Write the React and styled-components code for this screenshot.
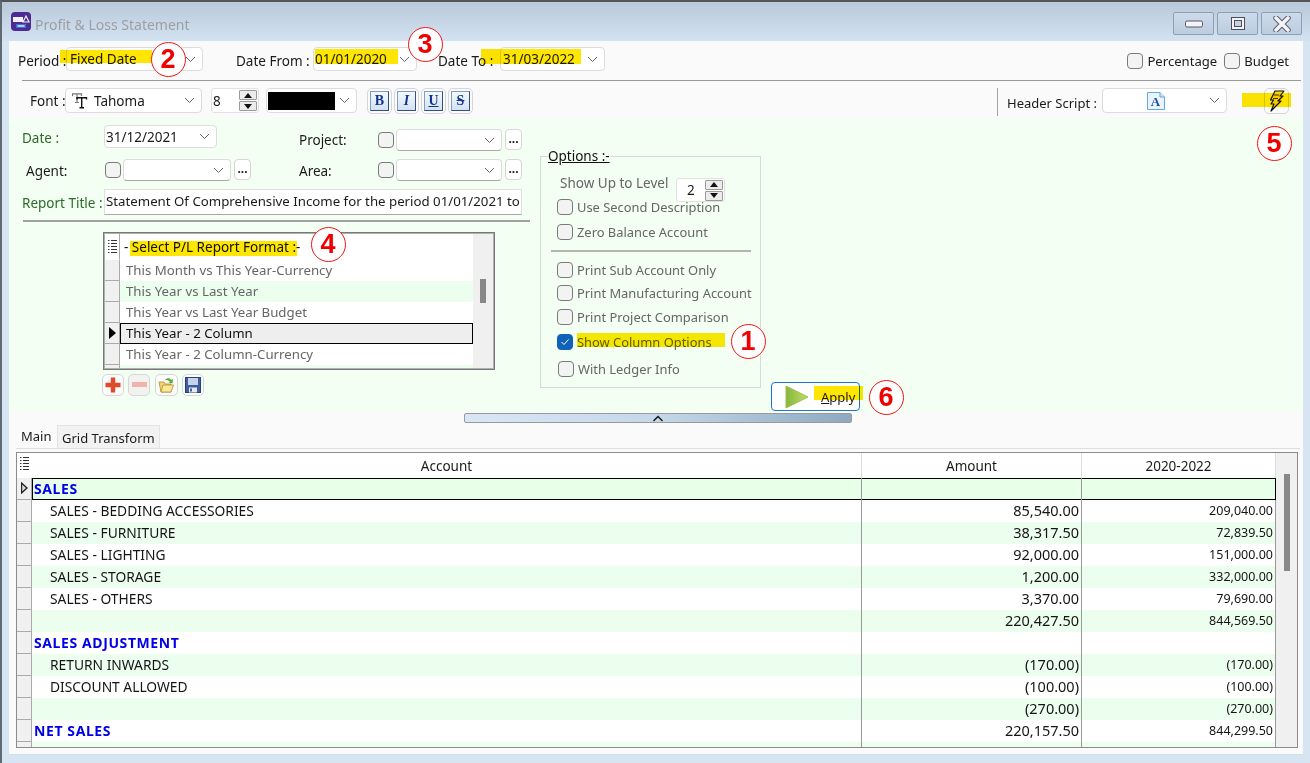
import React from 'react';
import styled, { createGlobalStyle } from 'styled-components';

const GlobalStyle = createGlobalStyle`
    html, body {
        margin: 0;
        padding: 0;
        background: #dae7f3;
    }
    * {
        box-sizing: border-box;
    }
`;

const Window = styled.div`
    position: relative;
    width: 1310px;
    height: 763px;
    overflow: hidden;
    display: flex;
    flex-direction: column;
    font-family: "Noto Sans", "Liberation Sans", sans-serif;
    font-size: 13.5px;
    color: #1a1a1a;
    background: #d7e5f3;
    border-top: 2px solid #555;
    border-left: 2px solid #5f6a75;
`;

const TitleBar = styled.div`
    height: 39px;
    flex: none;
    display: flex;
    align-items: flex-start;
    padding: 10px 8px 0 11px;
    margin-left: -2px;
    background: linear-gradient(#b8c9da, #d3e2f1);
`;

const AppTitle = styled.span`
    margin-left: 4px;
    margin-top: 3px;
    font-size: 14px;
    color: #9b9fa3;
`;

const WinButtons = styled.div`
    margin-left: auto;
    display: flex;
    gap: 3px;
`;

const WinButton = styled.div`
    width: 41px;
    height: 23px;
    border: 1px solid #8c9fb8;
    border-radius: 2px;
    background: linear-gradient(#cddaea, #bccde0);
    display: flex;
    align-items: center;
    justify-content: center;
`;

const Client = styled.div`
    flex: 1;
    width: 1294px;
    margin-left: 7px;
    background: #fafafa;
    display: flex;
    flex-direction: column;
    border-bottom: 1px solid #cfe0ee;
    margin-bottom: 8px;
`;

const TopRow = styled.div`
    height: 39px;
    flex: none;
    display: flex;
    align-items: flex-start;
    padding: 6px 14px 0 9px;
`;

const Rule = styled.div`
    height: 1px;
    flex: none;
    margin: 0 2px 0 13px;
    background: #9a9a9a;
`;

const FontRow = styled.div`
    height: 37px;
    flex: none;
    display: flex;
    align-items: flex-start;
    padding: 7px 14px 0 21px;
`;

const Label = styled.span`
    flex: none;
    width: ${(props) => props.$w}px;
    margin-left: ${(props) => props.$ml || 0}px;
    margin-top: ${(props) => props.$mt || 0}px;
    font-size: ${(props) => props.$fs || 13.5}px;
    line-height: 24px;
    white-space: nowrap;
    color: #1a1a1a;
`;

const ComboBox = styled.div`
    flex: none;
    width: ${(props) => props.$w}px;
    height: ${(props) => props.$h || 24}px;
    margin-left: ${(props) => props.$ml || 0}px;
    padding: 0 6px 0 ${(props) => props.$pl ?? 3}px;
    display: flex;
    align-items: center;
    background: #fff;
    border: 1px solid #dcdcdc;
    border-bottom-color: ${(props) => props.$flat ? '#a8a8a8' : '#dcdcdc'};
    border-radius: 4px;
    white-space: nowrap;
    svg.chev {
        margin-left: auto;
        flex: none;
    }
`;

const Checks = styled.div`
    margin-left: auto;
    display: flex;
    align-items: center;
    height: 28px;
    font-size: 13.1px;
`;

const CheckBox = styled.span`
    flex: none;
    width: 16px;
    height: 16px;
    margin-left: ${(props) => props.$ml || 0}px;
    margin-top: ${(props) => props.$mt || 0}px;
    border: 1px solid #7a7a7a;
    border-radius: 4px;
    background: ${(props) => props.$checked ? '#0f62b8' : '#f3f3f3'};
    border-color: ${(props) => props.$checked ? '#0f62b8' : '#7a7a7a'};
    display: flex;
    align-items: center;
    justify-content: center;
`;

const CheckText = styled.span`
    margin-left: 4px;
    white-space: nowrap;
    color: ${(props) => props.$dim ? '#666' : '#1a1a1a'};
`;

const Spin = styled.div`
    flex: none;
    width: ${(props) => props.$w}px;
    height: ${(props) => props.$h}px;
    margin-left: ${(props) => props.$ml || 0}px;
    padding: 0 1px 0 ${(props) => props.$pl}px;
    display: flex;
    align-items: center;
    justify-content: space-between;
    background: #fff;
    border: 1px solid #e2e2e2;
    border-radius: 3px;
`;

const SpinButtons = styled.div`
    display: flex;
    flex-direction: column;
    gap: 1px;
`;

const SpinButton = styled.div`
    width: 18px;
    height: 10px;
    background: #ececec;
    border: 1px solid #9a9a9a;
    border-radius: 1px;
    display: flex;
    align-items: center;
    justify-content: center;
`;

const Swatch = styled.div`
    width: 67px;
    height: 18px;
    background: #000;
`;

const StyleButtons = styled.div`
    margin-left: 10px;
    display: flex;
    gap: 2px;
`;

const IconButton = styled.div`
    flex: none;
    width: ${(props) => props.$w || 25}px;
    height: ${(props) => props.$h || 26}px;
    margin-left: ${(props) => props.$ml || 0}px;
    background: ${(props) => props.$muted ? '#f2f2f0' : '#fbfbfb'};
    border: 1px solid #d6d6d6;
    border-radius: 5px;
    display: flex;
    align-items: center;
    justify-content: center;
`;

const StyleTile = styled.span`
    width: 19px;
    height: 20px;
    display: flex;
    align-items: center;
    justify-content: center;
    background: linear-gradient(#f5f9fd, #d3e1f1);
    border: 1px solid #7f9dc4;
    border-right-color: #33517f;
    border-bottom-color: #33517f;
    font-family: "Liberation Serif", serif;
    font-size: 14px;
    font-weight: bold;
    color: #12358c;
    font-style: ${(props) => props.$italic ? 'italic' : 'normal'};
    text-decoration: ${(props) => props.$deco || 'none'};
`;

const VLine = styled.div`
    margin-left: auto;
    margin-right: 9px;
    width: 1px;
    height: 28px;
    background: #a3a3a3;
`;

const GreenPanel = styled.div`
    height: 294px;
    flex: none;
    display: flex;
    background: #f3fff2;
`;

const LeftColumn = styled.div`
    width: 531px;
    flex: none;
    padding: 7px 0 0 13px;
`;

const FormGrid = styled.div`
    display: grid;
    grid-template-columns: 82px 195px 79px 144px;
    grid-template-rows: 34px 30px 26px;
`;

const FieldLabel = styled.span`
    line-height: 23px;
    margin-top: ${(props) => props.$mt || 0}px;
    padding-left: ${(props) => props.$pl || 0}px;
    color: ${(props) => props.$green ? '#2c6b2c' : '#1a1a1a'};
    white-space: nowrap;
`;

const Field = styled.div`
    display: flex;
    align-items: flex-start;
    margin-top: ${(props) => props.$mt || 0}px;
`;

const DotsButton = styled.div`
    flex: none;
    width: 17px;
    height: 21px;
    margin-left: 3px;
    background: #fff;
    border: 1px solid #d6d6d6;
    border-radius: 4px;
    font-size: 12px;
    font-weight: bold;
    line-height: 18px;
    text-align: center;
`;

const TitleInput = styled.div`
    grid-column: 2 / -1;
    width: 418px;
    height: 26px;
    overflow: hidden;
    padding: 2px 0 0 1px;
    font-size: 13.25px;
    line-height: 19px;
    background: #fff;
    border: 1px solid #e0e0e0;
    border-bottom-color: #a8a8a8;
`;

const FormRule = styled.div`
    width: 507px;
    height: 2px;
    margin: 5px 0 0 1px;
    background: #a0a0a0;
`;

const ListBox = styled.div`
    width: 392px;
    height: 138px;
    margin: 10px 0 0 81px;
    display: flex;
    overflow: hidden;
    background: #fff;
    border: 1px solid #777;
    outline: 1px solid #b0b0b0;
    outline-offset: -2px;
    padding: 1px;
`;

const ListRows = styled.div`
    flex: 1;
    min-width: 0;
`;

const ListRow = styled.div`
    height: ${(props) => props.$head ? 26 : 21}px;
    display: flex;
    background: ${(props) => props.$alt ? '#ecfeee' : '#fff'};
`;

const Indicator = styled.div`
    flex: none;
    width: 15px;
    background: ${(props) => props.$plain ? '#fff' : '#f0f0f0'};
    border-right: 1px solid #aaa;
    border-bottom: 1px solid ${(props) => props.$plain ? '#fff' : '#aaa'};
    display: flex;
    align-items: center;
    justify-content: center;
`;

const ListText = styled.div`
    flex: 1;
    padding-left: ${(props) => props.$head ? 4 : 6}px;
    font-size: ${(props) => props.$head ? 13.5 : 13.25}px;
    line-height: ${(props) => props.$head ? 26 : 21}px;
    white-space: nowrap;
    color: ${(props) => props.$current || props.$head ? '#111' : '#666'};
    background: ${(props) => props.$current ? '#eee' : 'transparent'};
    box-shadow: ${(props) => props.$current ? 'inset 0 0 0 1px #000' : 'none'};
`;

const ScrollTrack = styled.div`
    flex: none;
    width: ${(props) => props.$w}px;
    background: #f0f0f0;
    padding-top: ${(props) => props.$top}px;
    padding-left: ${(props) => props.$left}px;
`;

const ScrollThumb = styled.div`
    width: 6px;
    height: ${(props) => props.$h}px;
    background: #888;
`;

const ListTools = styled.div`
    margin: 4px 0 0 80px;
    display: flex;
    gap: 4px;
`;

const OptionsBox = styled.fieldset`
    flex: none;
    width: 221px;
    height: 240px;
    margin: 30px 0 0 0;
    padding: 0;
    border: 1px solid #d6dbd3;
    min-width: 0;
`;

const OptionsLegend = styled.legend`
    margin-left: 7px;
    padding: 0;
    line-height: 16px;
    color: #111;
    text-decoration: underline;
`;

const LevelRow = styled.div`
    display: flex;
    margin-top: 14px;
    padding-left: 19px;
    height: 24px;
`;

const LevelText = styled.span`
    width: 116px;
    line-height: 11px;
    color: #666;
    white-space: nowrap;
`;

const OptionRow = styled.div`
    height: 16px;
    display: flex;
    align-items: center;
    font-size: 12.9px;
    margin-top: ${(props) => props.$mt}px;
    padding-left: ${(props) => props.$pl || 16}px;
`;

const OptionsRule = styled.div`
    height: 2px;
    margin: 10px 9px 0 10px;
    background: #b4b4b4;
`;

const ApplyButton = styled.div`
    flex: none;
    align-self: flex-end;
    width: 89px;
    height: 29px;
    margin: 0 0 1px 10px;
    padding-left: 13px;
    display: flex;
    align-items: center;
    font-size: 13px;
    background: #fff;
    border: 1px solid #1976c8;
    border-radius: 4px;
    span {
        margin-left: 12px;
    }
`;

const SplitRow = styled.div`
    height: 13px;
    flex: none;
    padding: 1px 0 0 455px;
`;

const SplitBar = styled.div`
    width: 388px;
    height: 10px;
    background: linear-gradient(90deg, #d8e7f5, #c4d8ea 50%, #8fa9c0);
    border: 1px solid #9a9a9a;
    border-radius: 2px;
    display: flex;
    align-items: center;
    justify-content: center;
`;

const Tabs = styled.div`
    height: 24px;
    flex: none;
    margin: 0 3px 0 7px;
    display: flex;
    align-items: stretch;
    font-size: 13px;
    border-bottom: 1px solid #dedede;
`;

const Tab = styled.div`
    width: ${(props) => props.$w}px;
    padding: ${(props) => props.$active ? '0 0 0 4px' : '2px 0 0 4px'};
    line-height: 20px;
    white-space: nowrap;
    background: ${(props) => props.$active ? 'transparent' : '#f2f2f2'};
    border: 1px solid ${(props) => props.$active ? 'transparent' : '#e3e3e3'};
    border-bottom: none;
    color: #1a1a1a;
`;

const GridFrame = styled.div`
    width: 1282px;
    height: 296px;
    margin: 3px 0 0 7px;
    flex: none;
    display: flex;
    overflow: hidden;
    background: #fff;
    border: 1px solid #8c8c8c;
`;

const DataTable = styled.table`
    width: 1259px;
    flex: none;
    table-layout: fixed;
    border-collapse: separate;
    border-spacing: 0;

    th {
        height: 25px;
        padding: 0;
        font-weight: normal;
        text-align: center;
        color: #1a1a1a;
        border-right: 1px solid #dcdcdc;
    }

    th:nth-child(1) { width: 15px; border-right: none; }
    th:nth-child(2) { width: 830px; }
    th:nth-child(3) { width: 220px; }
    th:nth-child(4) { width: 194px; }

    td {
        height: 22px;
        padding: 0 2px 2px;
        white-space: nowrap;
        border-right: 1px solid #999;
        color: #151515;
    }

    td:first-child {
        padding: 0;
        background: #f0f0f0;
        border-right: 1px solid #aaa;
        border-bottom: 1px solid #aaa;
        text-align: center;
    }
`;

const DataRow = styled.tr`
    background: ${(props) => props.$selected ? '#e8ffe8' : props.$alt ? '#ecfeee' : '#fff'};

    td:not(:first-child) {
        ${(props) => props.$selected ? 'box-shadow: inset 0 1px #000, inset 0 -1px #000;' : ''}
    }
    td:nth-child(2) {
        ${(props) => props.$selected ? 'box-shadow: inset 1px 1px #000, inset 0 -1px #000;' : ''}
    }
    td:last-child {
        ${(props) => props.$selected ? 'border-right-color: #000;' : ''}
    }
`;

const AccountCell = styled.td`
    padding-left: ${(props) => props.$head ? 2 : 18}px !important;
    font-size: ${(props) => props.$head ? 14 : 13.8}px;
    font-weight: ${(props) => props.$head ? 'bold' : 'normal'};
    letter-spacing: ${(props) => props.$head ? 0.6 : 0}px;
    color: ${(props) => props.$head ? '#0000e6' : '#151515'} !important;
`;

const AmountCell = styled.td`
    text-align: right;
    font-size: 14.5px;
`;

const YearCell = styled.td`
    text-align: right;
    font-size: 12.5px;
`;

const Highlight = styled.div`
    position: absolute;
    left: ${(props) => props.$x - 2}px;
    top: ${(props) => props.$y - 2}px;
    width: ${(props) => props.$w}px;
    height: ${(props) => props.$h}px;
    background: #ffe600;
    mix-blend-mode: multiply;
    pointer-events: none;
`;

const Callout = styled.div`
    position: absolute;
    left: ${(props) => props.$x - 19.5}px;
    top: ${(props) => props.$y - 19.5}px;
    width: 35px;
    height: 35px;
    border: 1.2px solid #f01414;
    border-radius: 50%;
    background: #fff;
    color: #f00000;
    font-family: "Liberation Sans", sans-serif;
    font-size: 27px;
    font-weight: bold;
    line-height: 32px;
    text-align: center;
`;

const GlyphIcon = styled.svg`
    flex: none;
    margin-right: 6px;
`;

const Chevron = ({ color = '#666' }) => (
    <svg className="chev" width="11" height="7" viewBox="0 0 11 7">
        <polyline points="1,1 5.5,5.5 10,1" fill="none" stroke={color} strokeWidth="1" />
    </svg>
);

const Arrow = ({ up }) => (
    <svg width="8" height="5" viewBox="0 0 8 5">
        <polygon points={up ? '4,0 8,5 0,5' : '0,0 8,0 4,5'} fill="#111" />
    </svg>
);

const Spinner = () => (
    <SpinButtons>
        <SpinButton><Arrow up /></SpinButton>
        <SpinButton><Arrow /></SpinButton>
    </SpinButtons>
);

const RowsIcon = () => (
    <svg width="9" height="15" viewBox="0 0 9 15">
        {[1, 4, 7, 10, 13].map((y) => (
            <g key={y}>
                <rect x="0" y={y} width="1.5" height="1" fill="#333" />
                <rect x="3" y={y} width="6" height="1" fill="#333" />
            </g>
        ))}
    </svg>
);

const AppLogo = () => (
    <svg width="20" height="19" viewBox="0 0 20 19">
        <rect width="20" height="19" rx="4" fill="#4b2c92" />
        <rect x="2" y="5" width="10" height="5" fill="#f2f0f8" />
        <path d="M12 10 L15 4 L18 10 Z" fill="none" stroke="#f2f0f8" strokeWidth="1.2" />
        <rect x="5" y="12" width="10" height="4" fill="#3f6fd0" />
        <rect x="6.5" y="13.2" width="7" height="1.5" fill="#dfe8fb" />
    </svg>
);

const MinIcon = () => (
    <svg width="18" height="8" viewBox="0 0 18 8">
        <rect x="0.5" y="1" width="17" height="6" rx="1.5" fill="#f4f4f6" stroke="#56586a" />
    </svg>
);

const MaxIcon = () => (
    <svg width="16" height="15" viewBox="0 0 16 15">
        <rect x="1.5" y="1.5" width="13" height="12" fill="none" stroke="#4c4e60" strokeWidth="1" />
        <rect x="3" y="3" width="10" height="9" fill="none" stroke="#f4f4f6" strokeWidth="2" />
        <rect x="4.5" y="4.5" width="7" height="6" fill="none" stroke="#4c4e60" strokeWidth="1" />
    </svg>
);

const CloseIcon = () => (
    <svg width="18" height="16" viewBox="0 0 18 16">
        <path d="M3 2 L15 14 M15 2 L3 14" stroke="#55576a" strokeWidth="5.4" strokeLinecap="round" />
        <path d="M3 2 L15 14 M15 2 L3 14" stroke="#f4f4f6" strokeWidth="3.6" strokeLinecap="round" />
    </svg>
);

const FontGlyph = () => (
    <GlyphIcon width="16" height="16" viewBox="0 0 16 16">
        <path d="M0.5 3 V0.8 H9.5 V3 M5 0.8 V9.5 M3 9.5 H7" fill="none" stroke="#777" strokeWidth="1.2" />
        <path d="M5 6.5 V4.8 H14.5 V6.5 M9.7 4.8 V14.5 M7.5 14.8 H12" fill="none" stroke="#111" strokeWidth="1.4" />
    </GlyphIcon>
);

const ScriptIcon = () => (
    <svg width="20" height="18" viewBox="0 0 20 18">
        <path d="M1.5 0.5 H14 L18.5 5 V17.5 H1.5 Z" fill="#eaf4fd" stroke="#62a8e4" />
        <path d="M14 0.5 V5 H18.5" fill="#cfe6fa" stroke="#62a8e4" />
        <text x="9.5" y="14" textAnchor="middle" fontFamily="Liberation Serif, serif" fontWeight="bold" fontSize="13" fill="#1f4fa0">A</text>
    </svg>
);

const BoltIcon = () => (
    <svg width="17" height="22" viewBox="0 0 17 22">
        <path d="M7 1 H16 L12 6 H15 L10 11 H13 L3 21 L6 14 H3 L5.5 10 H2.5 Z" fill="#f6e200" stroke="#111" strokeWidth="1.2" strokeLinejoin="round" />
        <path d="M6 5 H11 M5 8.5 H10" stroke="#111" strokeWidth="0.8" />
    </svg>
);

const PlusIcon = () => (
    <svg width="16" height="16" viewBox="0 0 16 16">
        <path d="M8 0.5 V15.5 M0.5 8 H15.5" stroke="#e2492a" strokeWidth="4.4" />
    </svg>
);

const MinusIcon = () => (
    <svg width="15" height="6" viewBox="0 0 15 6">
        <rect width="15" height="5" fill="#f2b3aa" />
    </svg>
);

const FolderIcon = () => (
    <svg width="17" height="17" viewBox="0 0 17 17">
        <path d="M1 5 H6 L7 7 H13 V15 H3 Z" fill="#f1d66f" stroke="#b08f2c" strokeWidth="0.8" />
        <path d="M3 15 L5 8 H15.5 L13 15 Z" fill="#f9e89a" stroke="#b08f2c" strokeWidth="0.8" />
        <path d="M7 3 C9 0.5 12 0.5 13 3 L15 2 L14.5 6.5 L10.5 5.5 L12 4.5 C11 3 9 3 7 3 Z" fill="#58a832" />
    </svg>
);

const SaveIcon = () => (
    <svg width="16" height="16" viewBox="0 0 16 16">
        <rect x="0.5" y="0.5" width="15" height="15" fill="#3f5f9e" stroke="#24407a" />
        <rect x="3" y="1" width="10" height="7" fill="#c6d4ea" />
        <rect x="4" y="10.5" width="8" height="5" fill="#e8e8ee" />
        <rect x="5" y="11.5" width="2" height="3" fill="#3f5f9e" />
    </svg>
);

const PlayIcon = () => (
    <svg width="24" height="24" viewBox="0 0 24 24">
        <defs>
            <linearGradient id="playFill" x1="0" y1="0" x2="1" y2="0">
                <stop offset="0" stopColor="#86b63c" />
                <stop offset="1" stopColor="#c4dd6a" />
            </linearGradient>
        </defs>
        <polygon points="1,1 23,12 1,23" fill="url(#playFill)" stroke="#9cc04c" strokeWidth="1" />
    </svg>
);

const ChevronUp = () => (
    <svg width="12" height="7" viewBox="0 0 12 7">
        <polyline points="1.5,6 6,1.5 10.5,6" fill="none" stroke="#111" strokeWidth="1.4" />
    </svg>
);

const Tick = () => (
    <svg width="10" height="8" viewBox="0 0 10 8">
        <polyline points="1.5,4 4,6.5 8.5,1.5" fill="none" stroke="#fff" strokeWidth="1" />
    </svg>
);

const reportFormats = [
    'This Month vs This Year-Currency',
    'This Year vs Last Year',
    'This Year vs Last Year Budget',
    'This Year - 2 Column',
    'This Year - 2 Column-Currency',
    '',
];

const rows = [
    { account: 'SALES', head: true, selected: true },
    { account: 'SALES - BEDDING ACCESSORIES', amount: '85,540.00', year: '209,040.00' },
    { account: 'SALES - FURNITURE', amount: '38,317.50', year: '72,839.50' },
    { account: 'SALES - LIGHTING', amount: '92,000.00', year: '151,000.00' },
    { account: 'SALES - STORAGE', amount: '1,200.00', year: '332,000.00' },
    { account: 'SALES - OTHERS', amount: '3,370.00', year: '79,690.00' },
    { account: '', amount: '220,427.50', year: '844,569.50' },
    { account: 'SALES ADJUSTMENT', head: true },
    { account: 'RETURN INWARDS', amount: '(170.00)', year: '(170.00)' },
    { account: 'DISCOUNT ALLOWED', amount: '(100.00)', year: '(100.00)' },
    { account: '', amount: '(270.00)', year: '(270.00)' },
    { account: 'NET SALES', head: true, amount: '220,157.50', year: '844,299.50' },
    { account: '' },
];

const Option = ({ label, mt, pl, checked }) => (
    <OptionRow $mt={mt} $pl={pl}>
        <CheckBox $checked={checked}>{checked && <Tick />}</CheckBox>
        <CheckText $dim>{label}</CheckText>
    </OptionRow>
);

export default function App() {
    return (
        <>
            <GlobalStyle />
            <Window>
                <TitleBar>
                    <AppLogo />
                    <AppTitle>Profit &amp; Loss Statement</AppTitle>
                    <WinButtons>
                        <WinButton><MinIcon /></WinButton>
                        <WinButton><MaxIcon /></WinButton>
                        <WinButton><CloseIcon /></WinButton>
                    </WinButtons>
                </TitleBar>
                <Client>
                    <TopRow>
                        <Label $w={48} $mt={2}>Period :</Label>
                        <ComboBox $w={137}>Fixed Date<Chevron /></ComboBox>
                        <Label $w={77} $ml={33} $mt={2}>Date From :</Label>
                        <ComboBox $w={104} $pl={1}>01/01/2020<Chevron /></ComboBox>
                        <Label $w={62} $ml={21} $mt={2}>Date To :</Label>
                        <ComboBox $w={105} $pl={2}>31/03/2022<Chevron /></ComboBox>
                        <Checks>
                            <CheckBox />
                            <CheckText>Percentage</CheckText>
                            <CheckBox $ml={7} />
                            <CheckText>Budget</CheckText>
                        </Checks>
                    </TopRow>
                    <Rule />
                    <FontRow>
                        <Label $w={35} $mt={1}>Font :</Label>
                        <ComboBox $w={137} $h={25} $pl={6}><FontGlyph />Tahoma<Chevron /></ComboBox>
                        <Spin $w={48} $h={25} $ml={9} $pl={1}>8<Spinner /></Spin>
                        <ComboBox $w={91} $h={25} $ml={7} $pl={1}><Swatch /><Chevron /></ComboBox>
                        <StyleButtons>
                            <IconButton><StyleTile>B</StyleTile></IconButton>
                            <IconButton><StyleTile $italic>I</StyleTile></IconButton>
                            <IconButton><StyleTile $deco="underline">U</StyleTile></IconButton>
                            <IconButton><StyleTile $deco="line-through">S</StyleTile></IconButton>
                        </StyleButtons>
                        <VLine />
                        <Label $w={95} $mt={3} $fs={13}>Header Script :</Label>
                        <ComboBox $w={125} $h={25} $pl={43}><ScriptIcon /><Chevron /></ComboBox>
                        <IconButton $ml={37}><BoltIcon /></IconButton>
                    </FontRow>
                    <GreenPanel>
                        <LeftColumn>
                            <FormGrid>
                                <FieldLabel $green $mt={2}>Date :</FieldLabel>
                                <Field><ComboBox $w={113} $h={23} $pl={1}>31/12/2021<Chevron /></ComboBox></Field>
                                <FieldLabel $mt={4}>Project:</FieldLabel>
                                <Field $mt={4}>
                                    <CheckBox $mt={3} />
                                    <ComboBox $w={106} $h={22} $flat $ml={2}><Chevron /></ComboBox>
                                    <DotsButton>...</DotsButton>
                                </Field>
                                <FieldLabel $pl={4} $mt={1}>Agent:</FieldLabel>
                                <Field>
                                    <CheckBox $ml={1} $mt={3} />
                                    <ComboBox $w={108} $h={22} $flat $ml={2}><Chevron /></ComboBox>
                                    <DotsButton>...</DotsButton>
                                </Field>
                                <FieldLabel $mt={1}>Area:</FieldLabel>
                                <Field>
                                    <CheckBox $mt={3} />
                                    <ComboBox $w={106} $h={22} $flat $ml={2}><Chevron /></ComboBox>
                                    <DotsButton>...</DotsButton>
                                </Field>
                                <FieldLabel $green $mt={3}>Report Title :</FieldLabel>
                                <TitleInput>Statement Of Comprehensive Income for the period 01/01/2021 to 31/12/2021</TitleInput>
                            </FormGrid>
                            <FormRule />
                            <ListBox>
                                <ListRows>
                                    <ListRow $head>
                                        <Indicator $plain><RowsIcon /></Indicator>
                                        <ListText $head>- Select P/L Report Format :-</ListText>
                                    </ListRow>
                                    {reportFormats.map((name, i) => (
                                        <ListRow key={i} $alt={i % 2 === 1 && i !== 3}>
                                            <Indicator>
                                                {i === 3 && <svg width="7" height="12" viewBox="0 0 7 12"><polygon points="0,0 7,6 0,12" fill="#000" /></svg>}
                                            </Indicator>
                                            <ListText $current={i === 3}>{name}</ListText>
                                        </ListRow>
                                    ))}
                                </ListRows>
                                <ScrollTrack $w={20} $top={45} $left={7}>
                                    <ScrollThumb $h={24} />
                                </ScrollTrack>
                            </ListBox>
                            <ListTools>
                                <IconButton $w={22} $h={22}><PlusIcon /></IconButton>
                                <IconButton $w={22} $h={22} $muted><MinusIcon /></IconButton>
                                <IconButton $w={23} $h={22} $ml={1}><FolderIcon /></IconButton>
                                <IconButton $w={22} $h={22}><SaveIcon /></IconButton>
                            </ListTools>
                        </LeftColumn>
                        <OptionsBox>
                            <OptionsLegend>Options :-</OptionsLegend>
                            <LevelRow>
                                <LevelText>Show Up to Level</LevelText>
                                <Spin $w={49} $h={24} $pl={10}>2<Spinner /></Spin>
                            </LevelRow>
                            <Option label="Use Second Description" mt={-3} />
                            <Option label="Zero Balance Account" mt={9} />
                            <OptionsRule />
                            <Option label="Print Sub Account Only" mt={10} />
                            <Option label="Print Manufacturing Account" mt={7} />
                            <Option label="Print Project Comparison" mt={8} />
                            <Option label="Show Column Options" mt={9} checked />
                            <Option label="With Ledger Info" mt={11} pl={17} />
                        </OptionsBox>
                        <ApplyButton>
                            <PlayIcon />
                            <span><u>A</u>pply</span>
                        </ApplyButton>
                    </GreenPanel>
                    <SplitRow>
                        <SplitBar><ChevronUp /></SplitBar>
                    </SplitRow>
                    <Tabs>
                        <Tab $active $w={41}>Main</Tab>
                        <Tab $w={103}>Grid Transform</Tab>
                    </Tabs>
                    <GridFrame>
                        <DataTable>
                            <thead>
                                <tr>
                                    <th><RowsIcon /></th>
                                    <th>Account</th>
                                    <th>Amount</th>
                                    <th>2020-2022</th>
                                </tr>
                            </thead>
                            <tbody>
                                {rows.map((row, i) => (
                                    <DataRow key={i} $selected={row.selected} $alt={i % 2 === 0 && !row.selected}>
                                        <td>
                                            {row.selected && (
                                                <svg width="7" height="12" viewBox="0 0 7 12"><polygon points="0.5,1 6,6 0.5,11" fill="#ddd" stroke="#222" strokeWidth="1.4" /></svg>
                                            )}
                                        </td>
                                        <AccountCell $head={row.head}>{row.account}</AccountCell>
                                        <AmountCell>{row.amount}</AmountCell>
                                        <YearCell>{row.year}</YearCell>
                                    </DataRow>
                                ))}
                            </tbody>
                        </DataTable>
                        <ScrollTrack $w={21} $top={21} $left={8}>
                            <ScrollThumb $h={97} />
                        </ScrollTrack>
                    </GridFrame>
                </Client>
                <Highlight $x={60} $y={50} $w={92} $h={13} />
                <Highlight $x={315} $y={49} $w={83} $h={15} />
                <Highlight $x={481} $y={49} $w={100} $h={15} />
                <Highlight $x={1242} $y={93} $w={49} $h={14} />
                <Highlight $x={130} $y={241} $w={167} $h={15} />
                <Highlight $x={577} $y={333} $w={148} $h={14} />
                <Highlight $x={814} $y={386} $w={49} $h={14} />
                <Callout $x={168} $y={59}>2</Callout>
                <Callout $x={425} $y={44}>3</Callout>
                <Callout $x={328} $y={244}>4</Callout>
                <Callout $x={1274} $y={143}>5</Callout>
                <Callout $x={748} $y={341}>1</Callout>
                <Callout $x={886} $y={397}>6</Callout>
            </Window>
        </>
    );
}
